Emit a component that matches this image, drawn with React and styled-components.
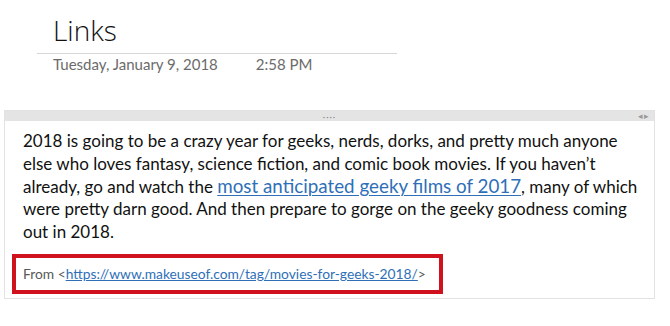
import styled, { createGlobalStyle } from "styled-components";

const GlobalStyle = createGlobalStyle`
  body {
    margin: 0;
    background: #ffffff;
    font-family: "Lato", "Open Sans", sans-serif;
  }
`;

const Page = styled.div`
  width: 670px;
  height: 326px;
  padding-top: 10px;
  box-sizing: border-box;
`;

const Header = styled.div`
  margin-left: 37px;
  width: 360px;
`;

const Title = styled.h1`
  margin: 0;
  padding: 2px 0 5px 16px;
  font-family: "Open Sans", sans-serif;
  font-weight: 300;
  font-size: 28px;
  line-height: 36px;
  color: #111;
  border-bottom: 1px solid #d6d6d6;
`;

const Stamp = styled.div`
  display: flex;
  gap: 38px;
  margin-top: 1px;
  padding-left: 16px;
  font-size: 15px;
  line-height: 18px;
  color: #6b6b6b;
`;

const Note = styled.div`
  margin: 37px 0 0 4px;
  width: 651px;
  border: 1px solid #e2e2e2;
  box-sizing: border-box;
`;

const Handle = styled.div`
  position: relative;
  height: 10px;
  background: #e4e4e4;
  display: flex;
  justify-content: center;
  align-items: center;
  font-size: 9px;
  color: #8a8a8a;
  letter-spacing: 1px;
`;

const Arrows = styled.span`
  position: absolute;
  right: 4px;
  top: -1px;
  font-size: 9px;
  color: #9a9a9a;
`;

const Body = styled.div`
  padding: 9px 8px 4px 7px;
`;

const Para = styled.p`
  margin: 0 0 0 11px;
  font-size: 17px;
  line-height: 22.75px;
  color: #111;
  white-space: nowrap;
`;

const Link = styled.a`
  color: #2e6fb8;
  font-size: 18.8px;
  line-height: 0;
  text-decoration: underline;
  text-decoration-thickness: 1px;
  text-underline-offset: 2px;
`;

const Source = styled.div`
  margin-top: 10px;
  width: 431px;
  height: 40px;
  box-sizing: border-box;
  border: 4px solid #d0121f;
  display: flex;
  align-items: center;
  padding-left: 7px;
  font-size: 13.8px;
  color: #595959;
`;

const SourceLink = styled.a`
  color: #2e6fb8;
  text-decoration: underline;
`;

export default function App() {
  return (
    <Page>
      <GlobalStyle />
      <Header>
        <Title>Links</Title>
        <Stamp>
          <span>Tuesday, January 9, 2018</span>
          <span>2:58 PM</span>
        </Stamp>
      </Header>
      <Note>
        <Handle>
          ····
          <Arrows>◂▸</Arrows>
        </Handle>
        <Body>
          <Para>
            2018 is going to be a crazy year for geeks, nerds, dorks, and
            pretty much anyone
            <br />
            else who loves fantasy, science fiction, and comic book movies. If
            you haven’t
            <br />
            already, go and watch the{" "}
            <Link href="#">most anticipated geeky films of 2017</Link>, many of
            which
            <br />
            were pretty darn good. And then prepare to gorge on the geeky
            goodness coming
            <br />
            out in 2018.
          </Para>
          <Source>
            From&nbsp;&lt;
            <SourceLink href="#">
              https://www.makeuseof.com/tag/movies-for-geeks-2018/
            </SourceLink>
            &gt;
          </Source>
        </Body>
      </Note>
    </Page>
  );
}
